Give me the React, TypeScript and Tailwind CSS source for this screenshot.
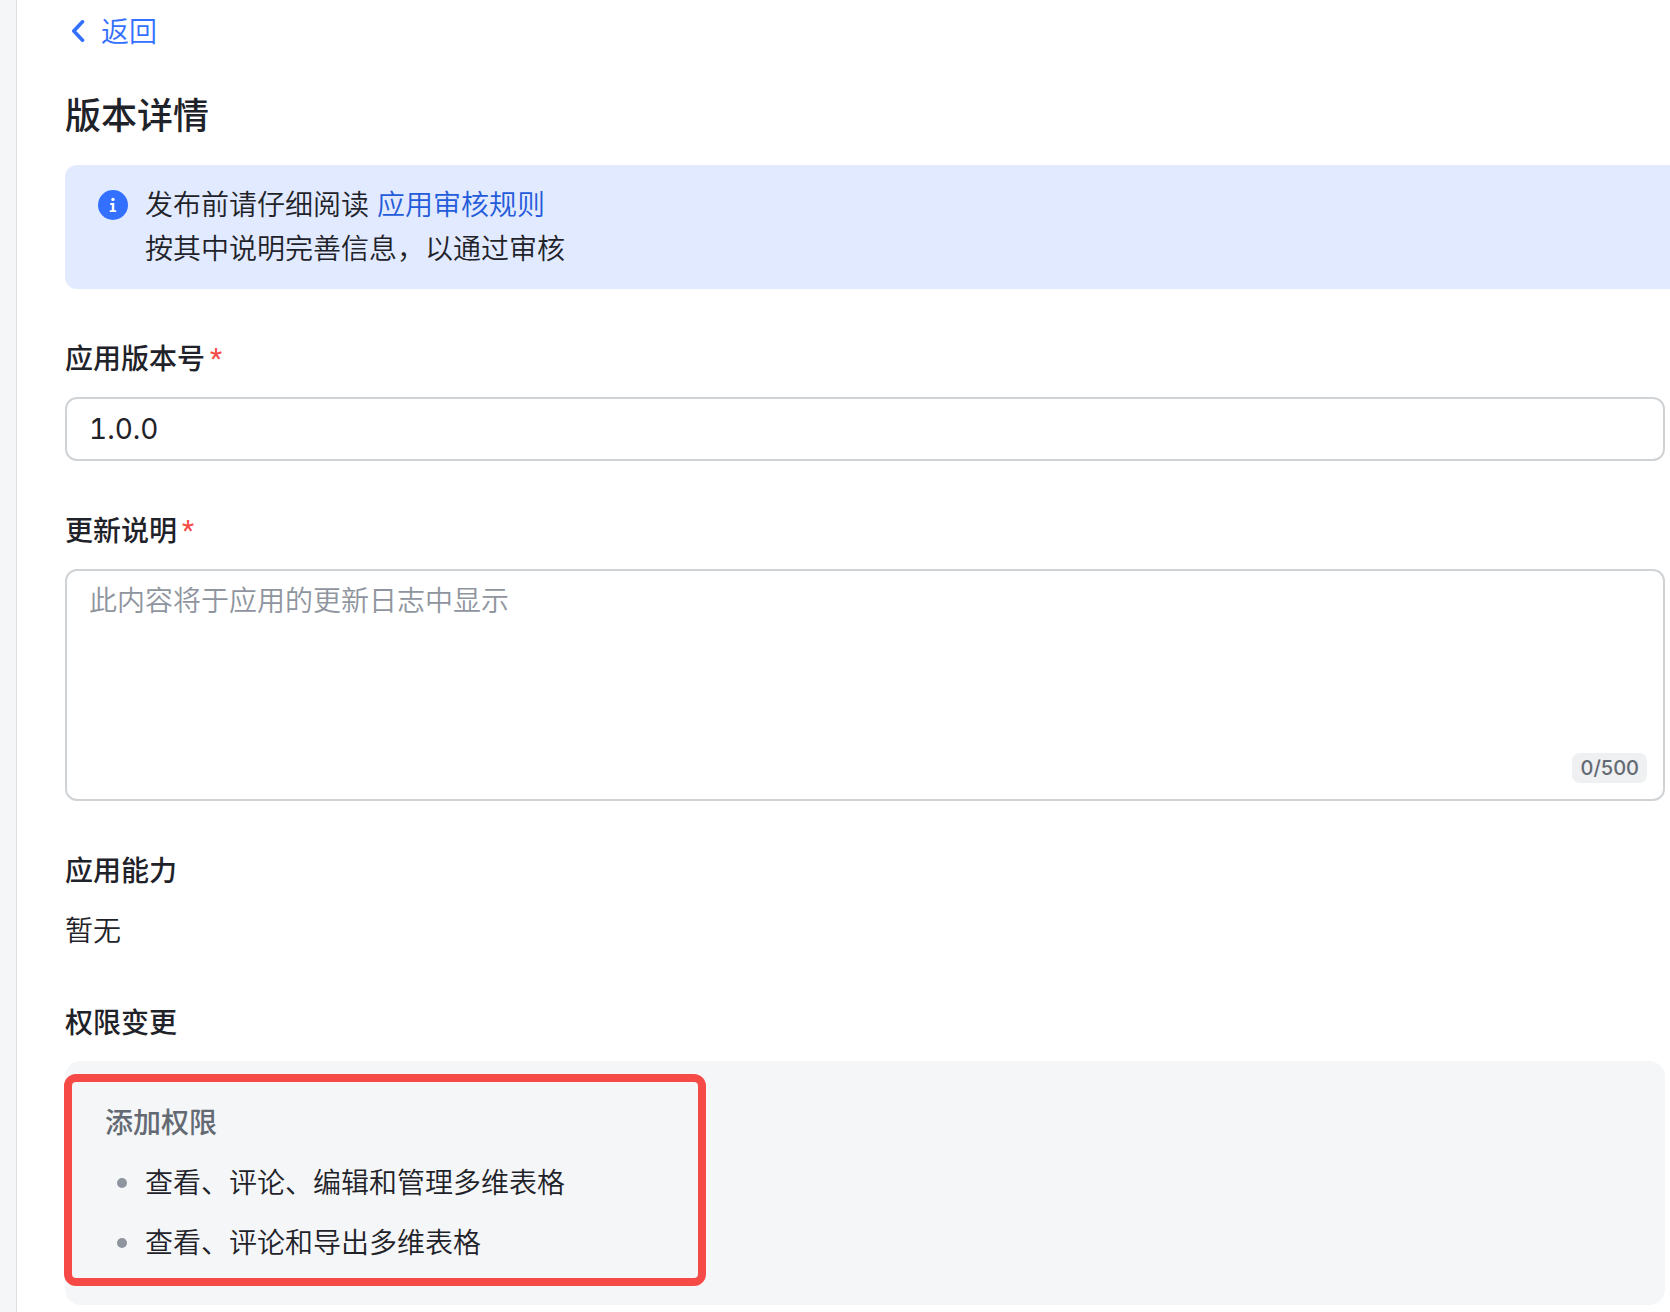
import { useState } from "react";

const MAX_NOTES = 500;

const ADDED_SCOPES = ["查看、评论、编辑和管理多维表格", "查看、评论和导出多维表格"];

function BackIcon() {
  return (
    <svg width="14" height="24" viewBox="0 1 14 24" fill="none" aria-hidden="true">
      <path
        d="M11.5 2.8L2.8 12l8.7 9.2"
        stroke="currentColor"
        strokeWidth="3.6"
        strokeLinecap="round"
        strokeLinejoin="round"
      />
    </svg>
  );
}

function InfoIcon() {
  return (
    <svg width="30" height="30" viewBox="0 0 30 30" aria-hidden="true">
      <circle cx="15" cy="15" r="15" fill="#3370ff" />
      <circle cx="15" cy="9.4" r="1.7" fill="#fff" />
      <path d="M12.3 13h4v7.2h1.9v1.9h-6.4v-1.9h2v-5.3h-1.5z" fill="#fff" />
    </svg>
  );
}

function FieldLabel({ htmlFor, children }: { htmlFor: string; children: string }) {
  return (
    <label htmlFor={htmlFor} className="flex gap-[5px] font-medium">
      {children}
      <span className="font-[Roboto,sans-serif] font-normal text-[#f54a45]">*</span>
    </label>
  );
}

export default function App() {
  const [version, setVersion] = useState("1.0.0");
  const [notes, setNotes] = useState("");

  return (
    <div className="flex min-h-screen bg-white font-[Inter,'Noto_Sans_CJK_SC',sans-serif] text-[28px] leading-[44px] font-[350] text-[#1f2329]">
      <aside className="w-[17px] shrink-0 border-r border-[#dee0e3] bg-[#f5f6f8]" />

      <main className="min-w-0 flex-1 pl-12 pt-[10px]">
        <a href="#back" className="inline-flex items-center gap-4 pl-[6px] align-top text-[#3370ff]">
          <BackIcon />
          返回
        </a>

        <h1 className="mt-[38px] mb-[25px] text-4xl leading-[48px] font-medium">版本详情</h1>

        <div className="flex gap-[17px] rounded-l-xl bg-[#e1eaff] py-[18px] pl-[33px]">
          <div className="flex h-11 items-center">
            <InfoIcon />
          </div>
          <p>
            发布前请仔细阅读{" "}
            <a href="#rules" className="text-[#245bdb]">
              应用审核规则
            </a>
            <br />
            按其中说明完善信息，以通过审核
          </p>
        </div>

        <div className="mt-12 mr-[5px] flex flex-col gap-12 pb-[7px]">
          <section className="flex flex-col gap-4">
            <FieldLabel htmlFor="version">应用版本号</FieldLabel>
            <input
              id="version"
              type="text"
              value={version}
              onChange={(e) => setVersion(e.target.value)}
              className="h-16 w-full rounded-xl border-2 border-[#d0d3d6] bg-white px-[22px] font-normal tabular-nums outline-none"
            />
          </section>

          <section className="flex flex-col gap-4">
            <FieldLabel htmlFor="notes">更新说明</FieldLabel>
            <div className="relative">
              <textarea
                id="notes"
                maxLength={MAX_NOTES}
                placeholder="此内容将于应用的更新日志中显示"
                value={notes}
                onChange={(e) => setNotes(e.target.value)}
                className="block h-[232px] w-full resize-none rounded-xl border-2 border-[#d0d3d6] bg-white px-[22px] py-2 outline-none placeholder:text-[#8f959e]"
              />
              <span className="absolute right-[18px] bottom-[18px] rounded-lg bg-[#eff0f1] px-2 text-xl leading-[30px] font-medium text-[#646a73]">
                {notes.length}/{MAX_NOTES}
              </span>
            </div>
          </section>

          <section className="flex flex-col gap-4">
            <h2 className="font-medium">应用能力</h2>
            <p>暂无</p>
          </section>

          <section className="flex flex-col gap-4">
            <h2 className="font-medium">权限变更</h2>
            <div className="relative flex flex-col gap-4 rounded-2xl bg-[#f5f6f8] p-10">
              <h3 className="font-medium text-[#646a73]">添加权限</h3>
              <ul className="flex flex-col gap-4 pl-3">
                {ADDED_SCOPES.map((scope) => (
                  <li key={scope} className="flex items-center gap-[18px]">
                    <span className="size-[10px] shrink-0 rounded-full bg-[#8f959e]" />
                    {scope}
                  </li>
                ))}
              </ul>
              {/* highlight frame over the added scopes */}
              <div className="pointer-events-none absolute top-[13px] -left-px h-[212px] w-[642px] rounded-xl border-8 border-[#f54a45]" />
            </div>
          </section>
        </div>
      </main>
    </div>
  );
}
